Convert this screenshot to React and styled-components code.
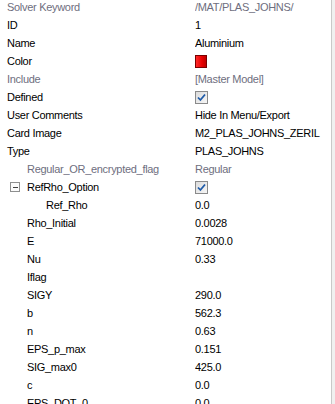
import React from "react";
import styled, { createGlobalStyle } from "styled-components";

const GlobalStyle = createGlobalStyle`
  html, body {
    margin: 0;
    padding: 0;
    background: #ffffff;
    overflow: hidden;
  }
`;

//property rows of the material card, indent is the tree depth
const rows = [
  { label: "Solver Keyword", value: "/MAT/PLAS_JOHNS/", dim: true, indent: 0 },
  { label: "ID", value: "1", indent: 0 },
  { label: "Name", value: "Aluminium", indent: 0 },
  { label: "Color", swatch: true, indent: 0 },
  { label: "Include", value: "[Master Model]", dim: true, indent: 0 },
  { label: "Defined", check: true, indent: 0 },
  { label: "User Comments", value: "Hide In Menu/Export", indent: 0 },
  { label: "Card Image", value: "M2_PLAS_JOHNS_ZERIL", indent: 0 },
  { label: "Type", value: "PLAS_JOHNS", indent: 0 },
  { label: "Regular_OR_encrypted_flag", value: "Regular", dim: true, indent: 1 },
  { label: "RefRho_Option", check: true, indent: 1, expander: true },
  { label: "Ref_Rho", value: "0.0", indent: 2 },
  { label: "Rho_Initial", value: "0.0028", indent: 1 },
  { label: "E", value: "71000.0", indent: 1 },
  { label: "Nu", value: "0.33", indent: 1 },
  { label: "Iflag", value: "", indent: 1 },
  { label: "SIGY", value: "290.0", indent: 1 },
  { label: "b", value: "562.3", indent: 1 },
  { label: "n", value: "0.63", indent: 1 },
  { label: "EPS_p_max", value: "0.151", indent: 1 },
  { label: "SIG_max0", value: "425.0", indent: 1 },
  { label: "c", value: "0.0", indent: 1 },
  { label: "EPS_DOT_0", value: "0.0", indent: 1 },
];

const Frame = styled.div`
  display: flex;
  width: 335px;
  height: 404px;
  overflow: hidden;
  font-family: "Liberation Sans", Arial, sans-serif;
  font-size: 11px;
`;

const Table = styled.div`
  width: 331px;
  border-right: 1px solid #c9c9c9;
  margin-top: -2px;
`;

const ScrollEdge = styled.div`
  flex: 1;
  background: #f0f0f0;
`;

const Row = styled.div`
  display: grid;
  grid-template-columns: 195px 1fr;
  height: 18px;
  align-items: center;
`;

const Label = styled.div`
  position: relative;
  padding-left: ${({ indent }) => 7 + indent * 20 - (indent === 2 ? 1 : 0)}px;
  color: ${({ dim }) => (dim ? "#6e6e7e" : "#000000")};
  white-space: nowrap;
  overflow: hidden;
  letter-spacing: -0.3px;
`;

const Value = styled.div`
  color: ${({ dim }) => (dim ? "#6e6e7e" : "#000000")};
  white-space: nowrap;
  overflow: hidden;
  display: flex;
  align-items: center;
  letter-spacing: -0.3px;
`;

const Expander = styled.span`
  position: absolute;
  left: 10px;
  top: 50%;
  margin-top: -5px;
  width: 8px;
  height: 8px;
  border: 1px solid #8e8f8f;
  background: #fbfbfb;
  box-sizing: content-box;
  &::after {
    content: "";
    position: absolute;
    left: 2px;
    top: 4px;
    width: 5px;
    height: 1px;
    background: #404040;
  }
`;

const Swatch = styled.span`
  display: inline-block;
  width: 10px;
  height: 11px;
  border: 1px solid #7a0000;
  background: linear-gradient(90deg, #ff2a2a 0%, #e80000 60%, #c00000 100%);
`;

const Check = styled.span`
  display: inline-flex;
  align-items: center;
  justify-content: center;
  width: 11px;
  height: 11px;
  border: 1px solid #8a8a8a;
  background: linear-gradient(135deg, #dcdcdc, #f6f6f6);
`;

const Tick = () => (
  <svg width="9" height="9" viewBox="0 0 9 9">
    <path d="M1 4.5 L3.4 7 L8 1.5" fill="none" stroke="#1e5aa8" strokeWidth="1.8" />
  </svg>
);

export default function App() {
  return (
    <>
      <GlobalStyle />
      <Frame>
        <Table>
          {rows.map((row, index) => (
            <Row key={index}>
              <Label indent={row.indent} dim={row.dim}>
                {row.expander && <Expander />}
                {row.label}
              </Label>
              <Value dim={row.dim}>
                {row.swatch && <Swatch />}
                {row.check && (
                  <Check>
                    <Tick />
                  </Check>
                )}
                {row.value}
              </Value>
            </Row>
          ))}
        </Table>
        <ScrollEdge />
      </Frame>
    </>
  );
}
